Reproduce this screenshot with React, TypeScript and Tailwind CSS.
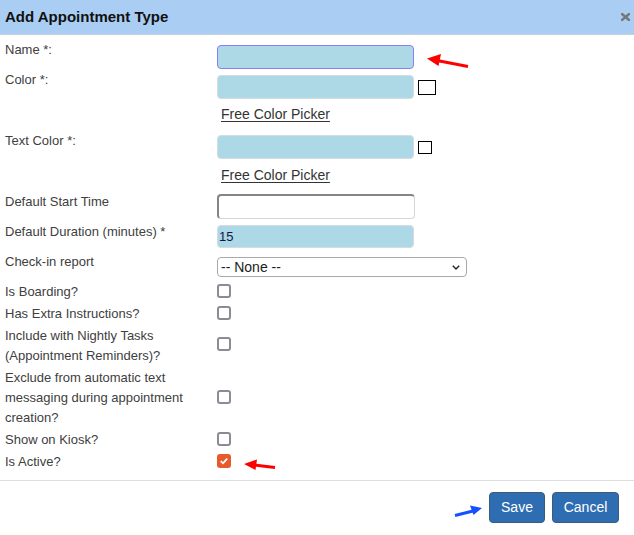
import type { ReactNode } from 'react';

interface RowProps {
  label?: ReactNode;
  children?: ReactNode;
  className?: string;
  ctrl?: string;
}

function Row({ label, children, className = '', ctrl = '' }: RowProps) {
  return (
    <div className={`flex py-px ${className}`}>
      <div className="w-[217px] shrink-0 pl-[5px] pr-[12px] leading-5">{label}</div>
      <div className={`flex-1 ${ctrl}`}>{children}</div>
    </div>
  );
}

function Check({ checked = false }: { checked?: boolean }) {
  if (checked) {
    return (
      <div className="flex h-[14px] w-[14px] items-center justify-center rounded-[3px] bg-[#e85a2b]">
        <svg width="10" height="10" viewBox="0 0 10 10">
          <polyline points="1.8,5.2 4,7.3 8.2,2.6" fill="none" stroke="#fff" strokeWidth="1.8" />
        </svg>
      </div>
    );
  }
  return <div className="h-[14px] w-[14px] rounded-[3px] border-2 border-[#8d8a98] bg-white" />;
}

function ColorLink() {
  return (
    <span className="pl-[4px] text-[14px] leading-5 text-[#333] underline underline-offset-2">
      Free Color Picker
    </span>
  );
}

export default function App() {
  return (
    <div className="relative h-[535px] w-[634px] overflow-hidden bg-white font-['Liberation_Sans',Arial,sans-serif] text-[13px] text-[#404040]">
      {/* Title bar */}
      <div className="flex h-[35px] items-center justify-between border-b border-[#c5d0da] bg-[#a9cdf3] pl-[5px] pr-[4px]">
        <span className="text-[15px] font-bold leading-5 text-[#111]">Add Appointment Type</span>
        <svg width="9" height="8" viewBox="0 0 9 8">
          <path d="M1 1 L8 7 M8 1 L1 7" stroke="#777" strokeWidth="2.4" strokeLinecap="square" />
        </svg>
      </div>

      {/* Form */}
      <div className="pt-[4px]">
        <Row label="Name *:" className="h-[30px]" ctrl="pt-[5px]">
          <div className="h-[24px] w-[197px] rounded-[4px] border border-[#8580f2] bg-[#add8e6]" />
        </Row>
        <Row label="Color *:" className="h-[30px]" ctrl="pt-[5px]">
          <div className="flex items-center gap-[4px]">
            <div className="h-[24px] w-[197px] rounded-[4px] border border-[#d3dde1] bg-[#add8e6]" />
            <div className="h-[15px] w-[18px] border border-black bg-white" />
          </div>
        </Row>
        <Row className="h-[31px]" ctrl="pt-[4px]">
          <ColorLink />
        </Row>
        <Row label="Text Color *:" className="h-[30px]" ctrl="pt-[4px]">
          <div className="flex items-center gap-[4px]">
            <div className="h-[24px] w-[197px] rounded-[4px] border border-[#d3dde1] bg-[#add8e6]" />
            <div className="h-[13px] w-[14px] border border-black bg-white" />
          </div>
        </Row>
        <Row className="h-[31px]" ctrl="pt-[4px]">
          <ColorLink />
        </Row>
        <Row label="Default Start Time" className="h-[30px]" ctrl="pt-[2px]">
          <div className="h-[25px] w-[198px] rounded-[4px] border-2 border-b border-r border-b-[#d6d6d6] border-l-[#858585] border-r-[#d6d6d6] border-t-[#858585] bg-white" />
        </Row>
        <Row label="Default Duration (minutes) *" className="h-[30px]" ctrl="pt-[3px]">
          <div className="flex h-[23px] w-[197px] items-center rounded-[4px] border border-[#d3dde1] bg-[#add8e6] pl-[1px] text-[13px] text-[#14144a]">
            15
          </div>
        </Row>
        <Row label="Check-in report" className="h-[30px]" ctrl="pt-[5px]">
          <div className="flex h-[20px] w-[250px] items-center justify-between rounded-[4px] border border-[#a9a9a9] bg-white pl-[3px] pr-[6px] text-[14px] text-[#222]">
            <span>-- None --</span>
            <svg width="8" height="5" viewBox="0 0 8 5">
              <polyline points="0.8,0.8 4,4 7.2,0.8" fill="none" stroke="#222" strokeWidth="1.4" />
            </svg>
          </div>
        </Row>
        <Row label="Is Boarding?" className="h-[22px]" ctrl="pt-[2px]">
          <Check />
        </Row>
        <Row label="Has Extra Instructions?" className="h-[22px]" ctrl="pt-[2px]">
          <Check />
        </Row>
        <Row label="Include with Nightly Tasks (Appointment Reminders)?" className="h-[42px]" ctrl="pt-[11px]">
          <Check />
        </Row>
        <Row
          label="Exclude from automatic text messaging during appointment creation?"
          className="h-[62px]"
          ctrl="pt-[22px]"
        >
          <Check />
        </Row>
        <Row label="Show on Kiosk?" className="h-[22px]" ctrl="pt-[2px]">
          <Check />
        </Row>
        <Row label="Is Active?" className="h-[22px]" ctrl="pt-[2px]">
          <Check checked />
        </Row>
      </div>

      {/* Footer */}
      <div className="mt-[7px] flex justify-end gap-[7px] border-t border-[#dddddd] pr-[15px] pt-[11px]">
        <button className="h-[31px] w-[56px] rounded-[4px] border border-[#3e5a7a] bg-[#2f6db3] text-[14px] text-white">
          Save
        </button>
        <button className="h-[31px] w-[67px] rounded-[4px] border border-[#3e5a7a] bg-[#2f6db3] text-[14px] text-white">
          Cancel
        </button>
      </div>

      {/* Annotation arrows drawn over the form */}
      <svg className="pointer-events-none absolute inset-0" width="634" height="535" viewBox="0 0 634 535">
        <path d="M468 66.5 L437 60.5" stroke="#f00" strokeWidth="3" />
        <polygon points="427,58.5 441,54 438.5,66" fill="#f00" />
        <path d="M275 467.5 L254 465" stroke="#f00" strokeWidth="3" />
        <polygon points="244,464 257,459.5 255.5,470" fill="#f00" />
        <path d="M455 515.5 L473 511" stroke="#1450ff" strokeWidth="3" />
        <polygon points="482,508 470,505.5 473.5,515" fill="#1450ff" />
      </svg>
    </div>
  );
}
